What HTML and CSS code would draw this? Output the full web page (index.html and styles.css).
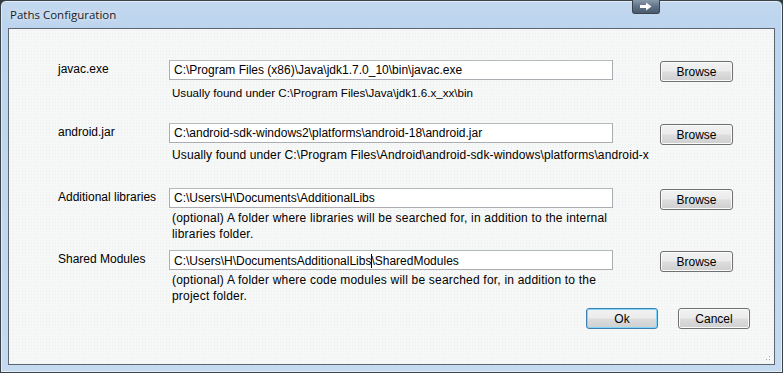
FILE: index.html
```html
<!DOCTYPE html>
<html>
<head>
<meta charset="utf-8">
<title>Paths Configuration</title>
<link rel="stylesheet" href="styles.css">
</head>
<body>
<div class="window">
  <div class="titlebar">
    <span class="title">Paths Configuration</span>
    <span class="tb-btn">
      <svg width="14" height="9" viewBox="0 0 14 9"><path d="M1 3h6V0.5L12.5 4.5 7 8.5V6H1z" fill="#fff"/></svg>
    </span>
  </div>
  <div class="client">
    <div class="form">
      <div class="row">
        <label class="lbl">javac.exe</label>
        <div class="field">C:\Program Files (x86)\Java\jdk1.7.0_10\bin\javac.exe</div>
        <button class="btn">Browse</button>
        <div class="help help-small">Usually found under C:\Program Files\Java\jdk1.6.x_xx\bin</div>
      </div>
      <div class="row">
        <label class="lbl">android.jar</label>
        <div class="field">C:\android-sdk-windows2\platforms\android-18\android.jar</div>
        <button class="btn">Browse</button>
        <div class="help help-wide">Usually found under C:\Program Files\Android\android-sdk-windows\platforms\android-x</div>
      </div>
      <div class="row">
        <label class="lbl">Additional libraries</label>
        <div class="field">C:\Users\H\Documents\AdditionalLibs</div>
        <button class="btn">Browse</button>
        <div class="help help-tight">(optional) A folder where libraries will be searched for, in addition to the internal libraries folder.</div>
      </div>
      <div class="row">
        <label class="lbl">Shared Modules</label>
        <div class="field">C:\Users\H\DocumentsAdditionalLibs<span class="caret"></span>\SharedModules</div>
        <button class="btn">Browse</button>
        <div class="help help-tight">(optional) A folder where code modules will be searched for, in addition to the project folder.</div>
      </div>
    </div>
    <div class="actions">
      <button class="btn btn-default">Ok</button>
      <button class="btn">Cancel</button>
    </div>
    <div class="grip"></div>
  </div>
</div>
</body>
</html>
```

FILE: styles.css
```css
html, body {
  margin: 0;
  padding: 0;
  background: #2f3a40;
}
body {
  width: 783px;
  height: 373px;
  overflow: hidden;
}
.window {
  box-sizing: border-box;
  width: 783px;
  height: 373px;
  border: 1px solid #3b4248;
  border-radius: 6px 6px 0 0;
  background: linear-gradient(180deg, #c2d8ef 0px, #bcd4ee 28px, #c5daef 100%);
  padding: 0 7px 7px 7px;
  display: flex;
  flex-direction: column;
  box-shadow: inset 0 0 0 1px #e2edf8;
}
.titlebar {
  height: 27px;
  display: flex;
  align-items: flex-start;
  flex: none;
}
.title {
  font-family: "Open Sans", "Noto Sans", sans-serif;
  font-size: 11.5px;
  color: #1b1b1b;
  margin-top: 6px;
  margin-left: 2px;
  text-shadow: 0 0 6px rgba(255,255,255,0.9);
}
.tb-btn {
  margin-left: auto;
  margin-right: 115px;
  margin-top: -1px;
  width: 28px;
  height: 14px;
  box-sizing: border-box;
  border: 1px solid #3a4450;
  border-top: none;
  border-radius: 0 0 3px 3px;
  background: linear-gradient(180deg, #8a9aac 0%, #5f7185 50%, #4a5b6e 100%);
  display: flex;
  align-items: center;
  justify-content: center;
}
.client {
  flex: 1;
  border: 1px solid #5b6670;
  background-color: #f6f7f7;
  background-image: radial-gradient(#eceeee 0.6px, transparent 0.7px);
  background-size: 3px 3px;
  position: relative;
  font-family: "Liberation Sans", Arial, sans-serif;
  font-size: 12px;
  color: #000;
  display: flex;
  flex-direction: column;
}
.form {
  display: grid;
  grid-template-rows: 63px 65px 62px 58px;
  padding: 31px 0 0 49px;
}
.row {
  display: grid;
  grid-template-columns: 111px 444px 47px 73px;
  grid-template-rows: 20px auto;
  align-content: start;
}
.lbl {
  grid-column: 1;
  grid-row: 1;
  align-self: center;
  padding-bottom: 3px;
  padding-top: 1px;
}
.field {
  grid-column: 2;
  grid-row: 1;
  box-sizing: border-box;
  height: 20px;
  border: 1px solid #abadb3;
  border-top-color: #b5b8bd;
  background: #fff;
  padding: 3px 0 0 4px;
  line-height: 13px;
  white-space: nowrap;
  overflow: hidden;
}
.caret {
  display: inline-block;
  width: 1px;
  height: 14px;
  background: #000;
  vertical-align: -3px;
  margin-right: -1px;
}
.help {
  grid-column: 2;
  grid-row: 2;
  padding: 5px 0 0 3px;
  line-height: 15px;
  white-space: nowrap;
}
.help-small {
  font-size: 11.6px;
}
.help-wide {
  grid-column: 2 / 5;
  letter-spacing: 0.12px;
}
.help-tight {
  padding-top: 2px;
  line-height: 16px;
  white-space: normal;
  letter-spacing: 0.2px;
}
.btn {
  grid-column: 4;
  grid-row: 1;
  box-sizing: border-box;
  width: 73px;
  height: 21px;
  margin-top: 1px;
  border: 1px solid #707070;
  border-radius: 3px;
  background: linear-gradient(180deg, #f2f2f2 0%, #ebebeb 48%, #dddddd 52%, #cfcfcf 100%);
  box-shadow: inset 0 0 0 1px #fbfbfb;
  font-family: "Liberation Sans", Arial, sans-serif;
  font-size: 12px;
  color: #000;
  padding: 0;
  line-height: 18px;
}
.actions {
  display: flex;
  gap: 20px;
  padding: 0 0 0 577px;
}
.actions .btn {
  width: 72px;
  height: 21px;
  margin: 0;
}
.btn-default {
  border-color: #3c7fb1;
  box-shadow: inset 0 0 0 1px #7fd6f8;
}
.grip {
  position: absolute;
  right: 2px;
  bottom: 2px;
  width: 10px;
  height: 10px;
  background-image: radial-gradient(#a0a8b0 0.8px, transparent 1px);
  background-size: 3px 3px;
  clip-path: polygon(100% 0, 100% 100%, 0 100%);
}
```
